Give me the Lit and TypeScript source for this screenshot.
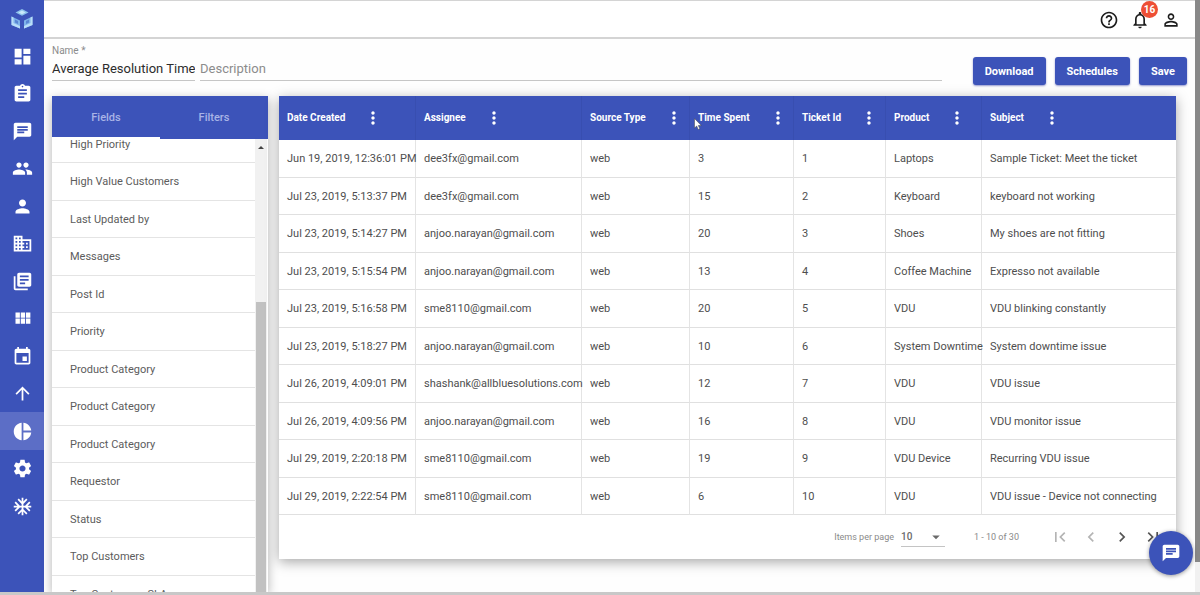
import { LitElement, html, css, svg } from "lit";
import { customElement, property, state } from "lit/decorators.js";
import { classMap } from "lit/directives/class-map.js";

const ICONS: Record<string, string> = {
  dashboard: "M3 13h8V3H3v10zm0 8h8v-6H3v6zm10 0h8V11h-8v10zm0-18v6h8V3h-8z",
  assignment:
    "M19 3h-4.18C14.4 1.84 13.3 1 12 1c-1.3 0-2.4.84-2.82 2H5c-1.1 0-2 .9-2 2v14c0 1.1.9 2 2 2h14c1.1 0 2-.9 2-2V5c0-1.1-.9-2-2-2zm-7 0c.55 0 1 .45 1 1s-.45 1-1 1-1-.45-1-1 .45-1 1-1zm2 14H7v-2h7v2zm3-4H7v-2h10v2zm0-4H7V7h10v2z",
  chat: "M20 2H4c-1.1 0-1.99.9-1.99 2L2 22l4-4h14c1.1 0 2-.9 2-2V4c0-1.1-.9-2-2-2zM6 9h12v2H6V9zm8 5H6v-2h8v2zm4-6H6V6h12v2z",
  people:
    "M16 11c1.66 0 2.99-1.34 2.99-3S17.66 5 16 5c-1.66 0-3 1.34-3 3s1.34 3 3 3zm-8 0c1.66 0 2.99-1.34 2.99-3S9.66 5 8 5C6.34 5 5 6.34 5 8s1.34 3 3 3zm0 2c-2.33 0-7 1.17-7 3.5V19h14v-2.5c0-2.33-4.67-3.5-7-3.5zm8 0c-.29 0-.62.02-.97.05 1.16.84 1.97 1.97 1.97 3.45V19h6v-2.5c0-2.33-4.67-3.5-7-3.5z",
  person:
    "M12 12c2.21 0 4-1.79 4-4s-1.79-4-4-4-4 1.79-4 4 1.79 4 4 4zm0 2c-2.67 0-8 1.34-8 4v2h16v-2c0-2.66-5.33-4-8-4z",
  business:
    "M12 7V3H2v18h20V7H12zM6 19H4v-2h2v2zm0-4H4v-2h2v2zm0-4H4V9h2v2zm0-4H4V5h2v2zm4 12H8v-2h2v2zm0-4H8v-2h2v2zm0-4H8V9h2v2zm0-4H8V5h2v2zm10 12h-8v-2h2v-2h-2v-2h2v-2h-2V9h8v10zm-2-8h-2v2h2v-2zm0 4h-2v2h2v-2z",
  library:
    "M4 6H2v14c0 1.1.9 2 2 2h14v-2H4V6zm16-4H8c-1.1 0-2 .9-2 2v12c0 1.1.9 2 2 2h12c1.1 0 2-.9 2-2V4c0-1.1-.9-2-2-2zm-1 9H9V9h10v2zm-4 4H9v-2h6v2zm4-8H9V5h10v2z",
  module:
    "M4 11h5V5H4v6zm0 7h5v-6H4v6zm6 0h5v-6h-5v6zm6 0h5v-6h-5v6zm-6-7h5V5h-5v6zm6-6v6h5V5h-5z",
  event:
    "M17 12h-5v5h5v-5zM16 1v2H8V1H6v2H5c-1.11 0-1.99.9-1.99 2L3 19c0 1.1.89 2 2 2h14c1.1 0 2-.9 2-2V5c0-1.1-.9-2-2-2h-1V1h-2zm3 18H5V8h14v11z",
  upward: "M4 12l1.41 1.41L11 7.83V20h2V7.83l5.58 5.59L20 12l-8-8-8 8z",
  pie: "M11 2v20c-5.07-.5-9-4.79-9-10s3.93-9.5 9-10zm2.03 0v8.99H22c-.47-4.74-4.24-8.52-8.97-8.99zm0 11.01V22c4.74-.47 8.5-4.25 8.97-8.99h-8.97z",
  settings:
    "M19.43 12.98c.04-.32.07-.64.07-.98s-.03-.66-.07-.98l2.11-1.65c.19-.15.24-.42.12-.64l-2-3.46c-.12-.22-.39-.3-.61-.22l-2.49 1c-.52-.4-1.08-.73-1.69-.98l-.38-2.65C14.46 2.18 14.25 2 14 2h-4c-.25 0-.46.18-.49.42l-.38 2.65c-.61.25-1.17.59-1.69.98l-2.49-1c-.23-.09-.49 0-.61.22l-2 3.46c-.13.22-.07.49.12.64l2.11 1.65c-.04.32-.07.65-.07.98s.03.66.07.98l-2.11 1.65c-.19.15-.24.42-.12.64l2 3.46c.12.22.39.3.61.22l2.49-1c.52.4 1.08.73 1.69.98l.38 2.65c.03.24.24.42.49.42h4c.25 0 .46-.18.49-.42l.38-2.65c.61-.25 1.17-.59 1.69-.98l2.49 1c.23.09.49 0 .61-.22l2-3.46c.12-.22.07-.49-.12-.64l-2.11-1.65zM12 15.5c-1.93 0-3.5-1.57-3.5-3.5s1.57-3.5 3.5-3.5 3.5 1.57 3.5 3.5-1.57 3.5-3.5 3.5z",
  snow: "M22 11h-4.17l3.24-3.24-1.41-1.42L15 11h-2V9l4.66-4.66-1.42-1.41L13 6.17V2h-2v4.17L7.76 2.93 6.34 4.34 11 9v2H9L4.34 6.34 2.93 7.76 6.17 11H2v2h4.17l-3.24 3.24 1.41 1.42L9 13h2v2l-4.66 4.66 1.42 1.41L11 17.83V22h2v-4.17l3.24 3.24 1.42-1.41L13 15v-2h2l4.66 4.66 1.41-1.42L17.83 13H22z",
  help: "M11 18h2v-2h-2v2zm1-16C6.48 2 2 6.48 2 12s4.48 10 10 10 10-4.48 10-10S17.52 2 12 2zm0 18c-4.41 0-8-3.59-8-8s3.59-8 8-8 8 3.59 8 8-3.59 8-8 8zm0-14c-2.21 0-4 1.79-4 4h2c0-1.1.9-2 2-2s2 .9 2 2c0 2-3 1.75-3 5h2c0-2.25 3-2.5 3-5 0-2.21-1.79-4-4-4z",
  bell: "M12 22c1.1 0 2-.9 2-2h-4c0 1.1.9 2 2 2zm6-6v-5c0-3.07-1.63-5.64-4.5-6.32V4c0-.83-.67-1.5-1.5-1.5s-1.5.67-1.5 1.5v.68C7.64 5.36 6 7.92 6 11v5l-2 2v1h16v-1l-2-2zm-2 1H8v-6c0-2.48 1.51-4.5 4-4.5s4 2.02 4 4.5v6z",
  account:
    "M12 5.9c1.16 0 2.1.94 2.1 2.1s-.94 2.1-2.1 2.1S9.9 9.16 9.9 8s.94-2.1 2.1-2.1m0 9c2.97 0 6.1 1.46 6.1 2.1v1.1H5.9V17c0-.64 3.13-2.1 6.1-2.1M12 4C9.79 4 8 5.79 8 8s1.79 4 4 4 4-1.79 4-4-1.79-4-4-4zm0 9c-2.67 0-8 1.34-8 4v3h16v-3c0-2.66-5.33-4-8-4z",
  more: "M12 8c1.1 0 2-.9 2-2s-.9-2-2-2-2 .9-2 2 .9 2 2 2zm0 2c-1.1 0-2 .9-2 2s.9 2 2 2 2-.9 2-2-.9-2-2-2zm0 6c-1.1 0-2 .9-2 2s.9 2 2 2 2-.9 2-2-.9-2-2-2z",
  first: "M18.41 16.59L13.82 12l4.59-4.59L17 6l-6 6 6 6zM6 6h2v12H6z",
  prev: "M15.41 7.41L14 6l-6 6 6 6 1.41-1.41L10.83 12z",
  next: "M10 6L8.59 7.41 13.17 12l-4.58 4.59L10 18l6-6z",
  last: "M5.59 7.41L10.18 12l-4.59 4.59L7 18l6-6-6-6zM16 6h2v12h-2z",
  dropdown: "M7 10l5 5 5-5z",
};

@customElement("app-icon")
class AppIcon extends LitElement {
  @property() name = "";

  static styles = css`
    :host {
      display: block;
      width: 20px;
      height: 20px;
    }
    svg {
      display: block;
      width: 100%;
      height: 100%;
      fill: currentColor;
    }
  `;

  render() {
    return html`<svg viewBox="0 0 24 24" aria-hidden="true">${svg`<path d=${ICONS[this.name] ?? ""}></path>`}</svg>`;
  }
}

const NAV = [
  ["dashboard", "Dashboard"],
  ["assignment", "Tasks"],
  ["chat", "Tickets"],
  ["people", "Teams"],
  ["person", "Customers"],
  ["business", "Companies"],
  ["library", "Knowledge base"],
  ["module", "Modules"],
  ["event", "Calendar"],
  ["upward", "Escalations"],
  ["pie", "Reports"],
  ["settings", "Settings"],
  ["snow", "Integrations"],
];

@customElement("side-nav")
class SideNav extends LitElement {
  @property() active = "";

  static styles = css`
    :host {
      display: block;
      background: #3c53b9;
      color: #fff;
    }
    .logo {
      display: flex;
      justify-content: center;
      height: 37px;
      align-items: center;
    }
    .logo svg {
      width: 24px;
      height: 24px;
    }
    .item {
      display: flex;
      align-items: center;
      justify-content: center;
      height: 37px;
      color: inherit;
    }
    .item:nth-of-type(odd) {
      height: 38px;
    }
    .item app-icon {
      width: 21px;
      height: 21px;
    }
    .active {
      background: #5c6ec6;
    }
  `;

  render() {
    return html`
      <div class="logo">
        <svg viewBox="0 0 24 24" aria-hidden="true">
          <path fill="#8fc3ec" d="M12 2 18.500 5.500 12 8.700 5.500 5.500z"></path>
          <path fill="#c9e9fa" d="M12 3.500 15.500 5.400 12 7.200 8.500 5.400z"></path>
          <path fill="#7fb4ea" d="M1.500 9.500 10 13.500V21.500L1.500 18z"></path>
          <path fill="#b9def8" d="M1.500 9.500 3.500 10.500V16L10 19v2.500L1.500 18z"></path>
          <path fill="#5a86d4" d="M5 12.500 8 14v3L5 15.500z"></path>
          <path fill="#7fb4ea" d="M22.500 9.500 14 13.500V21.500L22.500 18z"></path>
          <path fill="#b9def8" d="M22.500 9.500 20.500 10.500V16L14 19v2.500L22.500 18z"></path>
          <path fill="#5a86d4" d="M19 12.500 16 14v3l3-1.500z"></path>
        </svg>
      </div>
      <nav>
        ${NAV.map(
          ([icon, label]) => html`<a
            href="#${icon}"
            aria-label=${label}
            class=${classMap({ item: true, active: icon === this.active })}
            ><app-icon name=${icon}></app-icon
          ></a>`
        )}
      </nav>
    `;
  }
}

const FIELDS = [
  "High Priority",
  "High Value Customers",
  "Last Updated by",
  "Messages",
  "Post Id",
  "Priority",
  "Product Category",
  "Product Category",
  "Product Category",
  "Requestor",
  "Status",
  "Top Customers",
  "Top Customers SLA",
];

@customElement("fields-panel")
class FieldsPanel extends LitElement {
  @state() private tab = "Fields";

  static styles = css`
    :host {
      display: flex;
      flex-direction: column;
      background: #fff;
      box-shadow: 0 3px 10px rgba(0, 0, 0, 0.3);
      min-height: 0;
    }
    .tabs {
      display: grid;
      grid-template-columns: 1fr 1fr;
      flex: none;
      height: 43px;
      background: #3c53b9;
    }
    .tab {
      border: 0;
      border-bottom: 2px solid transparent;
      padding: 2px 0 0;
      background: none;
      color: #a9b4e6;
      font: 500 11px Roboto, sans-serif;
    }
    .tab.selected {
      border-bottom-color: #fff;
    }
    .body {
      display: flex;
      flex: 1;
      min-height: 0;
      overflow: hidden;
      padding-right: 1px;
    }
    .list {
      flex: 1;
      list-style: none;
      margin: -13px 0 0;
      padding: 0;
    }
    .field {
      display: flex;
      align-items: center;
      box-sizing: border-box;
      height: 37px;
      padding-left: 18px;
      border-bottom: 1px solid #e4e4e4;
      color: #5c5c5c;
      font-size: 11px;
    }
    .field:nth-child(even) {
      height: 38px;
    }
    .scrollbar {
      display: flex;
      flex-direction: column;
      align-items: center;
      width: 12px;
      background: #f1f1f1;
    }
    .arrow {
      margin: 7px 0 153px;
      border: 3px solid transparent;
      border-top: 0;
      border-bottom: 3px solid #444;
    }
    .thumb {
      flex: 1;
      width: 10px;
      background: #c1c1c1;
    }
  `;

  render() {
    return html`
      <div class="tabs" role="tablist">
        ${["Fields", "Filters"].map(
          (t) => html`<button
            role="tab"
            aria-selected=${t === this.tab}
            class=${classMap({ tab: true, selected: t === this.tab })}
            @click=${() => (this.tab = t)}
          >
            ${t}
          </button>`
        )}
      </div>
      <div class="body">
        <ul class="list">
          ${FIELDS.map((f) => html`<li class="field">${f}</li>`)}
        </ul>
        <div class="scrollbar">
          <span class="arrow"></span>
          <span class="thumb"></span>
        </div>
      </div>
    `;
  }
}

const COLUMNS = ["Date Created", "Assignee", "Source Type", "Time Spent", "Ticket Id", "Product", "Subject"];
const ROWS = [
  ["Jun 19, 2019, 12:36:01 PM", "dee3fx@gmail.com", "web", "3", "1", "Laptops", "Sample Ticket: Meet the ticket"],
  ["Jul 23, 2019, 5:13:37 PM", "dee3fx@gmail.com", "web", "15", "2", "Keyboard", "keyboard not working"],
  ["Jul 23, 2019, 5:14:27 PM", "anjoo.narayan@gmail.com", "web", "20", "3", "Shoes", "My shoes are not fitting"],
  ["Jul 23, 2019, 5:15:54 PM", "anjoo.narayan@gmail.com", "web", "13", "4", "Coffee Machine", "Expresso not available"],
  ["Jul 23, 2019, 5:16:58 PM", "sme8110@gmail.com", "web", "20", "5", "VDU", "VDU blinking constantly"],
  ["Jul 23, 2019, 5:18:27 PM", "anjoo.narayan@gmail.com", "web", "10", "6", "System Downtime", "System downtime issue"],
  ["Jul 26, 2019, 4:09:01 PM", "shashank@allbluesolutions.com", "web", "12", "7", "VDU", "VDU issue"],
  ["Jul 26, 2019, 4:09:56 PM", "anjoo.narayan@gmail.com", "web", "16", "8", "VDU", "VDU monitor issue"],
  ["Jul 29, 2019, 2:20:18 PM", "sme8110@gmail.com", "web", "19", "9", "VDU Device", "Recurring VDU issue"],
  ["Jul 29, 2019, 2:22:54 PM", "sme8110@gmail.com", "web", "6", "10", "VDU", "VDU issue - Device not connecting"],
];

@customElement("report-table")
class ReportTable extends LitElement {
  static styles = css`
    :host {
      display: block;
      background: #fff;
      box-shadow: 0 3px 12px rgba(0, 0, 0, 0.35);
    }
    .table {
      width: 100%;
      table-layout: fixed;
      border-collapse: separate;
      border-spacing: 0;
    }
    .c0 { width: 137px; }
    .c1 { width: 166px; }
    .c2 { width: 108px; }
    .c3 { width: 104px; }
    .c4 { width: 92px; }
    .c5 { width: 96px; }
    .th {
      box-sizing: border-box;
      height: 44px;
      padding: 0 0 1px 8px;
      border-right: 1px solid #384eb0;
      background: #3c53b9;
      color: #fff;
      font-size: 10px;
      font-weight: 700;
      text-align: left;
      white-space: nowrap;
    }
    .head {
      display: flex;
      align-items: center;
      gap: 18px;
    }
    .more {
      display: block;
      padding: 0;
      border: 0;
      background: none;
      color: #fff;
    }
    .td {
      box-sizing: border-box;
      height: 37px;
      padding: 0 0 0 8px;
      border-right: 1px solid #e4e4e4;
      border-bottom: 1px solid #e0e0e0;
      color: #4e4e4e;
      font-size: 11px;
      white-space: nowrap;
    }
    .row:nth-child(odd) .td {
      height: 38px;
    }
    .th:last-child,
    .td:last-child {
      border-right-color: transparent;
    }
    .pager {
      display: flex;
      align-items: center;
      justify-content: flex-end;
      height: 44px;
      padding-right: 8px;
      color: #8a8a8a;
      font-size: 9px;
    }
    .size {
      display: flex;
      align-items: center;
      gap: 7px;
    }
    .select {
      display: grid;
      align-items: center;
      width: 44px;
      height: 18px;
      border-bottom: 1px solid #c4c4c4;
      color: #6a6a6a;
    }
    .select select {
      grid-area: 1 / 1;
      appearance: none;
      width: 100%;
      border: 0;
      padding: 0;
      background: none;
      color: inherit;
      font: 500 10px Roboto, sans-serif;
    }
    .select app-icon {
      grid-area: 1 / 1;
      justify-self: end;
      width: 18px;
      height: 18px;
      pointer-events: none;
    }
    .range {
      margin: 0 25px 0 29px;
    }
    .step {
      padding: 0;
      width: 31px;
      border: 0;
      background: none;
      color: #555;
      display: flex;
      justify-content: center;
    }
    .step:disabled {
      color: #b4b4b4;
    }
  `;

  render() {
    return html`
      <table class="table">
        <colgroup>
          ${COLUMNS.map((_, i) => html`<col class="c${i}" />`)}
        </colgroup>
        <thead>
          <tr>
            ${COLUMNS.map(
              (c) => html`<th class="th" scope="col">
                <div class="head">
                  <span>${c}</span>
                  <button class="more" aria-label="${c} options"><app-icon name="more"></app-icon></button>
                </div>
              </th>`
            )}
          </tr>
        </thead>
        <tbody>
          ${ROWS.map((r) => html`<tr class="row">${r.map((v) => html`<td class="td">${v}</td>`)}</tr>`)}
        </tbody>
      </table>
      <div class="pager">
        <div class="size">
          <label for="size">Items per page</label>
          <span class="select">
            <select id="size"><option>10</option><option>25</option></select>
            <app-icon name="dropdown"></app-icon>
          </span>
        </div>
        <span class="range">1 - 10 of 30</span>
        <button class="step" disabled aria-label="First page"><app-icon name="first"></app-icon></button>
        <button class="step" disabled aria-label="Previous page"><app-icon name="prev"></app-icon></button>
        <button class="step" aria-label="Next page"><app-icon name="next"></app-icon></button>
        <button class="step" aria-label="Last page"><app-icon name="last"></app-icon></button>
      </div>
    `;
  }
}

@customElement("app-root")
class AppRoot extends LitElement {
  static styles = css`
    :host {
      display: flex;
      flex-direction: column;
      box-sizing: border-box;
      height: 100vh;
      overflow: hidden;
      border-bottom: 3px solid #c8c8c8;
      background: #fefefe;
      font-family: Roboto, sans-serif;
      font-size: 11px;
      color: #333;
    }
    .shell {
      display: flex;
      flex: 1;
      min-height: 0;
    }
    .nav {
      flex: none;
      width: 44px;
    }
    .main {
      display: flex;
      flex-direction: column;
      flex: 1;
      min-width: 0;
    }
    .topbar {
      display: flex;
      align-items: center;
      justify-content: flex-end;
      gap: 11px;
      flex: none;
      box-sizing: border-box;
      height: 39px;
      padding: 1px 14px 0 0;
      border-top: 1px solid #d4d4d4;
      border-bottom: 2px solid #d4d4d4;
      background: #fff;
    }
    .tool {
      position: relative;
      padding: 0;
      border: 0;
      background: none;
      color: #1c1c1c;
    }
    .badge {
      position: absolute;
      top: -9px;
      left: 11px;
      width: 17px;
      height: 17px;
      border-radius: 50%;
      background: #ee4f35;
      color: #fff;
      font: 700 10px/17px Roboto, sans-serif;
      text-align: center;
    }
    .form {
      display: flex;
      align-items: flex-end;
      flex: none;
      height: 46px;
      padding: 0 8px;
    }
    .group {
      display: flex;
      flex-direction: column;
      margin-bottom: 4px;
      margin-right: 5px;
    }
    .name {
      width: 143px;
    }
    .description {
      flex: 1;
      margin-right: 31px;
    }
    .label {
      color: #8c8c8c;
      font-size: 10px;
      line-height: 12px;
    }
    .input {
      width: 100%;
      box-sizing: border-box;
      height: 24px;
      padding: 0 0 1px;
      border: 0;
      border-bottom: 1px solid #c6c6c6;
      background: none;
      color: #2c2c2c;
      font: 400 13px Roboto, sans-serif;
      outline: 0;
    }
    .input::placeholder {
      color: #8c8c8c;
      opacity: 1;
    }
    .actions {
      display: flex;
      gap: 9px;
    }
    .button {
      height: 28px;
      padding: 0 12px;
      border: 0;
      border-radius: 3px;
      background: #3c53b9;
      box-shadow: 0 1px 2px rgba(40, 50, 160, 0.5);
      color: #fff;
      font: 700 11px Roboto, sans-serif;
    }
    .content {
      display: flex;
      align-items: flex-start;
      gap: 11px;
      flex: 1;
      min-height: 0;
      padding: 11px 19px 0 8px;
    }
    .fields {
      align-self: stretch;
      flex: none;
      width: 216px;
    }
    .report {
      flex: 1;
      min-width: 0;
    }
    .scroll {
      display: flex;
      flex: none;
      width: 5px;
      background: #f1f1f1;
    }
    .scroll-thumb {
      width: 100%;
      height: 95%;
      background: #888;
    }
    .fab {
      position: fixed;
      right: 7px;
      bottom: 20px;
      display: flex;
      align-items: center;
      justify-content: center;
      width: 44px;
      height: 44px;
      padding: 0;
      border: 0;
      border-radius: 50%;
      background: #3c53b9;
      box-shadow: 0 1px 4px rgba(0, 0, 0, 0.4);
      color: #fff;
    }
    .pointer {
      position: fixed;
      left: 694px;
      top: 118px;
      width: 8px;
      height: 12px;
    }
  `;

  render() {
    return html`
      <div class="shell">
        <side-nav class="nav" active="pie"></side-nav>
        <main class="main">
          <header class="topbar">
            <button class="tool" aria-label="Help"><app-icon name="help"></app-icon></button>
            <button class="tool" aria-label="Notifications">
              <app-icon name="bell"></app-icon><span class="badge">16</span>
            </button>
            <button class="tool" aria-label="Account"><app-icon name="account"></app-icon></button>
          </header>
          <form class="form" @submit=${(e: Event) => e.preventDefault()}>
            <div class="group name">
              <label class="label" for="name">Name *</label>
              <input class="input" id="name" .value=${"Average Resolution Time"} />
            </div>
            <div class="group description">
              <input class="input" aria-label="Description" placeholder="Description" />
            </div>
            <div class="actions">
              <button class="button" type="button">Download</button>
              <button class="button" type="button">Schedules</button>
              <button class="button" type="submit">Save</button>
            </div>
          </form>
          <section class="content">
            <fields-panel class="fields"></fields-panel>
            <report-table class="report"></report-table>
          </section>
        </main>
        <div class="scroll"><div class="scroll-thumb"></div></div>
      </div>
      <button class="fab" aria-label="Open chat"><app-icon name="chat"></app-icon></button>
      <svg class="pointer" viewBox="0 0 8 12" aria-hidden="true">
        <path d="M.5.5v9.500l2.200-2 1.500 3.500 1.600-.7-1.500-3.300h3z" fill="#fff" stroke="#444" stroke-width=".5"></path>
      </svg>
    `;
  }
}
